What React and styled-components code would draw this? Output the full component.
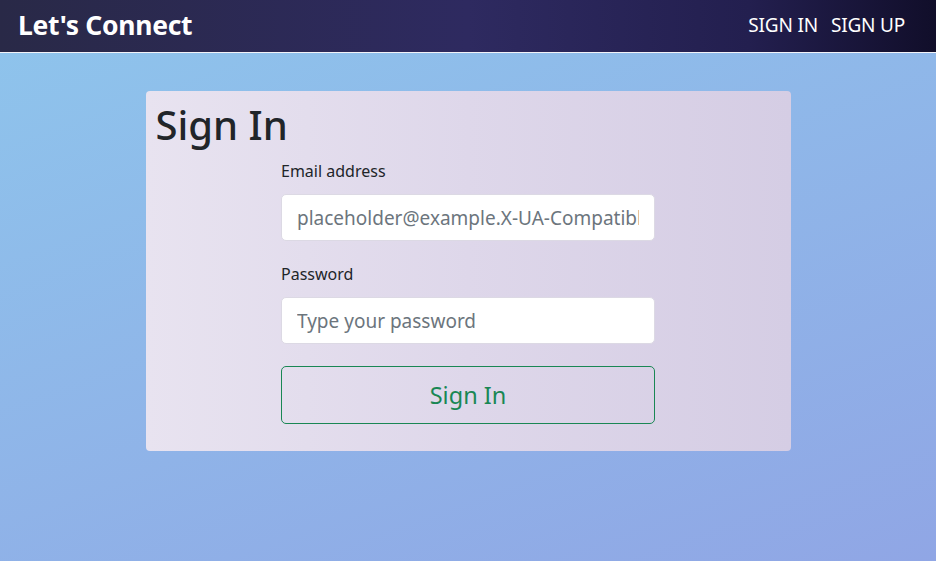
import React from "react";
import styled, { createGlobalStyle } from "styled-components";

const GlobalStyle = createGlobalStyle`
  html, body {
    margin: 0;
    padding: 0;
  }
  body {
    font-family: "Noto Sans", "Open Sans", sans-serif;
    color: #212529;
  }
  * {
    box-sizing: border-box;
  }
`;

const Page = styled.div`
  min-height: 561px;
  display: flex;
  flex-direction: column;
  background: linear-gradient(160deg, #8ec5ec 0%, #90a6e5 100%);
`;

const NavBar = styled.nav`
  height: 53px;
  display: flex;
  align-items: center;
  justify-content: space-between;
  padding: 0 31px 0 18px;
  background: linear-gradient(90deg, #292947 0%, #2e2a60 50%, #231f4f 80%, #110e2a 100%);
  border-bottom: 1px solid #f2f2f8;
`;

const Brand = styled.a`
  color: #fff;
  font-size: 26.5px;
  font-weight: 700;
  letter-spacing: -0.3px;
  text-decoration: none;
  margin-top: -2px;
`;

const NavLinks = styled.div`
  display: flex;
  gap: 13px;
  margin-top: -3px;
`;

const NavLink = styled.a`
  color: #fff;
  font-size: 19px;
  text-decoration: none;
  letter-spacing: -0.2px;
`;

const Main = styled.main`
  display: flex;
  justify-content: center;
  padding-top: 38px;
`;

const Card = styled.section`
  width: 645px;
  padding: 10px 10px 27px;
  border-radius: 4px;
  background: linear-gradient(90deg, #e8e3f0 0%, #ded7ea 50%, #d5cde4 100%);
`;

const Title = styled.h1`
  margin: 0 0 11px;
  font-size: 40px;
  font-weight: 500;
  line-height: 1.2;
  color: #212529;
`;

const Form = styled.form`
  width: 374px;
  margin: 0 auto;
  display: flex;
  flex-direction: column;
`;

const Field = styled.div`
  margin-bottom: 22px;
`;

const Label = styled.label`
  display: block;
  font-size: 16px;
  margin-bottom: 12px;
  color: #212529;
`;

const Input = styled.input`
  display: block;
  width: 100%;
  height: 47px;
  padding: 0 15px;
  font-family: inherit;
  font-size: 19px;
  color: #212529;
  background: #fff;
  border: 1px solid #dcd9e4;
  border-radius: 5px;
  outline: none;

  &::placeholder {
    color: #6c757d;
  }
`;

const Button = styled.button`
  height: 58px;
  width: 100%;
  font-family: inherit;
  font-size: 23.5px;
  color: #198754;
  background: transparent;
  border: 1px solid #198754;
  border-radius: 5px;
  cursor: pointer;
`;

const App = () => {
  return (
    <>
      <GlobalStyle />
      <Page>
        <NavBar>
          <Brand href="#">Let's Connect</Brand>
          <NavLinks>
            <NavLink href="#">SIGN IN</NavLink>
            <NavLink href="#">SIGN UP</NavLink>
          </NavLinks>
        </NavBar>
        <Main>
          <Card>
            <Title>Sign In</Title>
            <Form onSubmit={(e) => e.preventDefault()}>
              <Field>
                <Label htmlFor="email">Email address</Label>
                <Input
                  id="email"
                  type="email"
                  placeholder="placeholder@example.X-UA-Compatible"
                />
              </Field>
              <Field>
                <Label htmlFor="password">Password</Label>
                <Input
                  id="password"
                  type="password"
                  placeholder="Type your password"
                />
              </Field>
              <Button type="submit">Sign In</Button>
            </Form>
          </Card>
        </Main>
      </Page>
    </>
  );
};

export default App;
